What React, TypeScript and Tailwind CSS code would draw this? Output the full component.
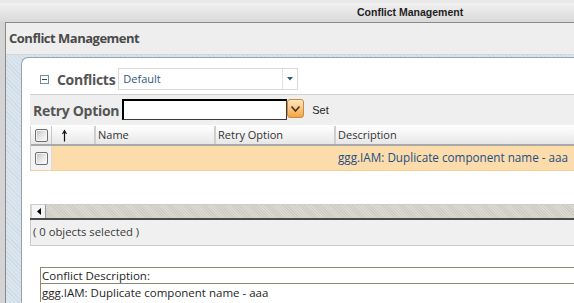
import React from 'react';

function Checkbox() {
  return (
    <span className="block w-[13px] h-[13px] rounded-[2px] border border-[#707070] bg-linear-to-br from-[#bdbdbd] via-[#e6e6e6] to-white shadow-[inset_0_0_0_1px_#f4f4f4]" />
  );
}

function SortArrow() {
  return (
    <svg width="7" height="13" viewBox="0 0 7 13">
      <path d="M3.5 2.5V12.5" stroke="#111" strokeWidth="1.2" />
      <path d="M1.5 5L3.5 1.5L5.5 5" fill="none" stroke="#111" strokeWidth="1.1" />
    </svg>
  );
}

export default function App() {
  const sans = "font-['Open_Sans','DejaVu_Sans',sans-serif]";
  const arial = "font-['Liberation_Sans',Arial,sans-serif]";

  return (
    <div className={`w-[574px] h-[303px] overflow-hidden bg-[#d9d9d9] flex flex-col ${sans}`}>
      {/* window title */}
      <div className="h-[22px] shrink-0 border-t-[3px] border-[#e9e9e9] bg-linear-to-b from-[#f1f1f1] to-[#d9d9d9] flex items-center">
        <span className={`pl-[357px] text-[10.5px] font-bold text-[#1e1e1e] ${arial}`}>Conflict Management</span>
      </div>

      <div className="flex-1 flex min-h-0">
        <div className="w-[5px] shrink-0 bg-[#d4d4d4]" />
        <div className="flex-1 flex flex-col border-l border-t border-[#8a8a8a] bg-[#eeeeee] min-w-0">
          {/* page header */}
          <div className="h-[32px] shrink-0 border-b border-[#d6d6d6] flex items-center pl-[3px]">
            <span className="text-[13px] font-bold text-[#4a4a4a] tracking-[-0.5px]">Conflict Management</span>
          </div>

          <div className="flex-1 flex bg-[repeating-linear-gradient(45deg,#cfdbe5_0px,#cfdbe5_1px,#dbe5ed_1px,#dbe5ed_3px)] pt-[2px] min-h-0">
            <div className="w-[15px] shrink-0" />
            <div className="flex-1 flex flex-col bg-white border-l border-t border-[#8ea3b6] rounded-tl-[7px] pl-[8px] min-w-0">
              {/* conflicts selector */}
              <div className="flex items-center pt-[10px] h-[32px] shrink-0">
                <span className="ml-[10px] w-[9px] h-[9px] border border-[#6e8ea6] flex items-center justify-center">
                  <span className="block w-[5px] h-px bg-[#2b4a60]" />
                </span>
                <span className="ml-[8px] text-[14px] font-bold text-[#555] tracking-[-0.3px]">Conflicts</span>
                <div className="ml-[3px] w-[180px] h-[22px] border border-[#d9d9d9] flex items-center">
                  <span className="flex-1 pl-[4px] text-[11px] text-[#2a5a80]">Default</span>
                  <span className="w-[15px] h-full border-l border-[#e2e2e2] flex items-center justify-center">
                    <svg width="6" height="4" viewBox="0 0 6 4">
                      <path d="M0 0H6L3 3.5Z" fill="#2c5d78" />
                    </svg>
                  </span>
                </div>
              </div>

              {/* retry option toolbar */}
              <div className="mt-[4px] h-[31px] shrink-0 border-t border-[#cfcfcf] bg-[#efefef] flex items-start pt-[4px]">
                <span className="pl-[3px] pt-[1px] text-[14px] font-bold text-[#555] tracking-[-0.3px]">Retry Option</span>
                <div className="ml-[3px] flex items-start">
                  <div className="w-[165px] h-[21px] bg-white border border-[#3a3a3a] border-t-2 border-l-2 border-t-black border-l-black" />
                  <div className="w-[17px] h-[19px] rounded-[3px] border border-[#c98b3c] bg-linear-to-b from-[#fde6bd] to-[#f5a441] flex items-center justify-center">
                    <svg width="11" height="8" viewBox="0 0 11 8">
                      <path d="M1.5 1.5L5.5 6L9.5 1.5" fill="none" stroke="#4a3210" strokeWidth="1.6" />
                    </svg>
                  </div>
                </div>
                <span className={`ml-[8px] pt-[3px] text-[11px] text-[#222] ${arial}`}>Set</span>
              </div>

              {/* grid */}
              <div className="mt-[1px] border-l border-[#cfcfcf] shrink-0">
                <div className="h-[20px] flex border-b-2 border-[#a9a9a9] bg-linear-to-b from-white to-[#e7e7e7] text-[11px] text-[#333]">
                  <div className="w-[21px] shrink-0 border-r border-[#c8c8c8] flex items-center justify-center">
                    <Checkbox />
                  </div>
                  <div className="w-[44px] shrink-0 border-r-2 border-[#cfcfcf] flex items-center pl-[9px]">
                    <SortArrow />
                  </div>
                  <div className="w-[120px] shrink-0 border-r-2 border-[#cfcfcf] flex items-center pl-[2px]">Name</div>
                  <div className="w-[120px] shrink-0 border-r-2 border-[#cfcfcf] flex items-center pl-[2px]">Retry Option</div>
                  <div className="flex-1 flex items-center pl-[2px]">Description</div>
                </div>
                <div className="h-[25px] flex bg-[#fddcac] border-b border-[#f3cf9c]">
                  <div className="w-[21px] shrink-0 bg-[#f3f3f3] border-r border-[#dcdcdc] flex items-center justify-center">
                    <Checkbox />
                  </div>
                  <div className="w-[284px] shrink-0" />
                  <div className="flex-1 flex items-center pl-[2px] text-[11.7px] text-[#1b4f86] whitespace-nowrap">
                    ggg.IAM: Duplicate component name - aaa
                  </div>
                </div>
              </div>

              <div className="h-[33px] shrink-0" />

              {/* horizontal scrollbar */}
              <div className="h-[16px] shrink-0 border-t border-[#cdcdcd] border-b-2 border-b-[#4a4a4a] bg-[repeating-linear-gradient(45deg,#cfccc5_0px,#cfccc5_1px,#dcd9d3_1px,#dcd9d3_2px)] flex pl-[2px]">
                <div className="w-[14px] h-full bg-[#f4f4f4] border-r border-[#9c9c9c] flex items-center justify-center">
                  <svg width="4" height="7" viewBox="0 0 4 7">
                    <path d="M4 0V7L0 3.5Z" fill="#000" />
                  </svg>
                </div>
              </div>

              {/* status */}
              <div className="h-[26px] shrink-0 border-l border-b border-[#cccccc] bg-[#f0f0f0] flex items-center pl-[2px]">
                <span className="text-[11.3px] text-[#3a3a3a]">( 0 objects selected )</span>
              </div>

              {/* conflict description */}
              <div className="mt-[21px] ml-[10px] border-l border-t border-[#8b8b72] text-[11.5px] text-[#1e1e1e]">
                <div className="h-[16px] border-b border-[#8b8b72] flex items-center pl-[1px]">Conflict Description:</div>
                <div className="h-[18px] flex items-center pl-[1px] whitespace-nowrap">ggg.IAM: Duplicate component name - aaa</div>
              </div>
            </div>
          </div>
        </div>
      </div>
    </div>
  );
}
